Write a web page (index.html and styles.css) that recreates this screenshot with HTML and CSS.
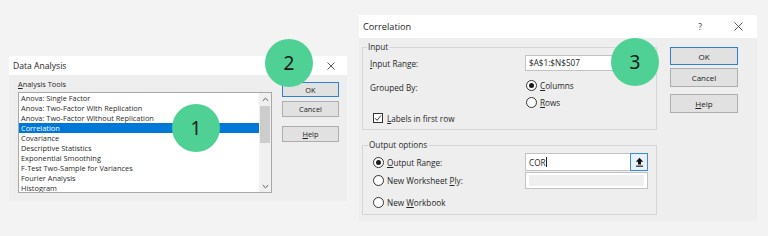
FILE: index.html
```html
<!DOCTYPE html>
<html>
<head>
<meta charset="utf-8">
<title>Data Analysis - Correlation</title>
<link rel="stylesheet" href="styles.css">
</head>
<body>
<div class="page">
  <section class="dlg dlg-left">
    <header class="titlebar">
      <span class="title">Data Analysis</span>
      <svg class="xicon" width="8" height="8" viewBox="0 0 8 8"><path d="M0.5 0.5 L7.5 7.5 M7.5 0.5 L0.5 7.5" stroke="#444" stroke-width="0.9" fill="none"/></svg>
    </header>
    <div class="lbody">
      <div class="tools">
        <div class="lbl"><u>A</u>nalysis Tools</div>
        <div class="listbox">
          <ul class="items">
            <li>Anova: Single Factor</li>
            <li>Anova: Two-Factor With Replication</li>
            <li>Anova: Two-Factor Without Replication</li>
            <li class="sel">Correlation</li>
            <li>Covariance</li>
            <li>Descriptive Statistics</li>
            <li>Exponential Smoothing</li>
            <li>F-Test Two-Sample for Variances</li>
            <li>Fourier Analysis</li>
            <li>Histogram</li>
          </ul>
          <div class="scrollbar">
            <span class="sarrow"><svg width="7" height="5" viewBox="0 0 7 5"><path d="M0.8 3.8 L3.5 1.2 L6.2 3.8" stroke="#555" stroke-width="1" fill="none"/></svg></span>
            <span class="thumb"></span>
            <span class="sfill"></span>
            <span class="sarrow"><svg width="7" height="5" viewBox="0 0 7 5"><path d="M0.8 1.2 L3.5 3.8 L6.2 1.2" stroke="#555" stroke-width="1" fill="none"/></svg></span>
          </div>
        </div>
      </div>
      <div class="lbtns">
        <button class="btn primary b-ok">OK</button>
        <button class="btn b-cancel">Cancel</button>
        <button class="btn b-help"><u>H</u>elp</button>
      </div>
    </div>
  </section>

  <section class="dlg dlg-right">
    <header class="titlebar">
      <span class="title">Correlation</span>
      <span class="qmark">?</span>
      <svg class="xicon" width="9" height="9" viewBox="0 0 9 9"><path d="M0.5 0.5 L8.5 8.5 M8.5 0.5 L0.5 8.5" stroke="#444" stroke-width="0.9" fill="none"/></svg>
    </header>
    <div class="rbody">
      <div class="groups">
        <fieldset class="grp grp-in">
          <legend>Input</legend>
          <div class="row r-range">
            <span class="rlabel"><u>I</u>nput Range:</span>
            <span class="field f-in">$A$1:$N$507</span>
          </div>
          <div class="row r-group">
            <span class="rlabel gb">Grouped By:</span>
            <div class="radios">
              <div class="opt"><span class="radio on"></span><span><u>C</u>olumns</span></div>
              <div class="opt"><span class="radio"></span><span><u>R</u>ows</span></div>
            </div>
          </div>
          <div class="row r-check">
            <span class="check"><svg width="8" height="8" viewBox="0 0 8 8"><path d="M1 4.2 L3 6.3 L7 1.5" stroke="#222" stroke-width="0.9" fill="none"/></svg></span>
            <span><u>L</u>abels in first row</span>
          </div>
        </fieldset>
        <fieldset class="grp grp-out">
          <legend>Output options</legend>
          <div class="row o1">
            <div class="olabel"><span class="radio on"></span><span><u>O</u>utput Range:</span></div>
            <div class="field f-out"><span class="txt">COR<span class="caret"></span></span>
              <span class="pick"><svg width="9" height="10" viewBox="0 0 9 10"><path d="M4.5 0.8 L8.2 4.8 L6 4.8 L6 7.6 L3 7.6 L3 4.8 L0.8 4.8 Z" fill="#111"/><rect x="1" y="8.6" width="7" height="1.1" fill="#111"/></svg></span>
            </div>
          </div>
          <div class="row o2">
            <div class="olabel"><span class="radio"></span><span>New Worksheet <u>P</u>ly:</span></div>
            <div class="field f-dis"><span class="disfill"></span></div>
          </div>
          <div class="row o3">
            <div class="olabel"><span class="radio"></span><span>New <u>W</u>orkbook</span></div>
          </div>
        </fieldset>
      </div>
      <div class="rbtns">
        <button class="btn primary rb-ok">OK</button>
        <button class="btn rb-cancel">Cancel</button>
        <button class="btn rb-help"><u>H</u>elp</button>
      </div>
    </div>
  </section>

  <span class="badge b1">1</span>
  <span class="badge b2">2</span>
  <span class="badge b3">3</span>
</div>
</body>
</html>
```

FILE: styles.css
```css
* { box-sizing: border-box; }
html, body { margin: 0; padding: 0; }
body {
  background: #f3f3f3;
  font-family: "Open Sans", "Noto Sans", sans-serif;
  color: #262626;
  width: 768px;
  height: 236px;
  overflow: hidden;
}
u { text-decoration: underline; text-underline-offset: 1px; text-decoration-thickness: 0.6px; }

.page {
  position: relative;
  display: flex;
  align-items: flex-start;
  gap: 12px;
  padding-left: 9px;
  height: 236px;
}

.dlg { background: #eeeeee; display: flex; flex-direction: column; }
.dlg-left { width: 338px; height: 145px; margin-top: 56px; }
.dlg-right { width: 398px; height: 206px; margin-top: 15px; }

.titlebar { background: #ffffff; display: flex; align-items: center; padding-left: 4px; flex: none; }
.title { flex: 1; color: #1e1e1e; }
.dlg-left .titlebar { height: 19px; padding-right: 12px; }
.dlg-left .title { font-size: 8.6px; }
.dlg-right .titlebar { height: 23px; padding-right: 14px; }
.dlg-right .title { font-size: 9.2px; }
.qmark { font-size: 8.6px; color: #333; margin-right: 32px; }
.xicon { display: block; }

/* left dialog body */
.lbody { display: flex; padding-left: 9px; }
.tools { width: 254px; }
.lbl { font-size: 7.4px; line-height: 10px; margin-top: 4px; margin-bottom: 3px; }
.listbox {
  height: 101px;
  border: 1px solid #a8a8a8;
  background: #ffffff;
  display: flex;
}
.items { list-style: none; margin: 0; padding: 0; flex: 1; overflow: hidden; }
.items li {
  height: 10px;
  line-height: 10px;
  padding-left: 2px;
  font-size: 7.4px;
  white-space: nowrap;
  color: #2a2a2a;
}
.items li.sel { background: #0078d7; color: #ffffff; }
.scrollbar {
  width: 12px;
  background: #f0f0f0;
  display: flex;
  flex-direction: column;
  align-items: center;
}
.sarrow { height: 12px; display: flex; align-items: center; justify-content: center; }
.thumb { width: 10px; height: 37px; margin-top: 1px; background: #cdcdcd; }
.sfill { flex: 1; }

.btn {
  font-family: inherit;
  font-size: 7.4px;
  color: #222;
  background: #e1e1e1;
  border: 1px solid #adadad;
  padding: 0;
  margin: 0;
  display: flex;
  align-items: center;
  justify-content: center;
}
.btn.primary { border-color: #2f7fd4; }
.lbtns { width: 57px; margin-left: 10px; margin-top: 7px; display: flex; flex-direction: column; }
.b-ok { height: 15px; }
.b-cancel { height: 16px; margin-top: 4px; }
.b-help { height: 16px; margin-top: 9px; }

/* right dialog body */
.rbody { display: flex; padding: 4px 0 0 3px; font-size: 8.2px; }
.groups { width: 295px; display: flex; flex-direction: column; gap: 10px; }
.grp { margin: 0; padding: 0; border: 1px solid #d6d6d6; min-width: 0; }
.grp legend { font-size: 8.2px; line-height: 10px; padding: 0 1px; margin-left: 4px; color: #2a2a2a; }
.grp-out legend { margin-left: 5px; }
.row { display: flex; }
.rlabel { width: 162px; padding-left: 7px; flex: none; }

.r-range { margin-top: 3px; height: 16px; align-items: center; }
.field { background: #ffffff; border: 1px solid #c3c3c3; }
.f-in { width: 97px; height: 16px; padding-left: 3px; line-height: 14px; }

.r-group { margin-top: 8px; }
.gb { margin-top: 4px; line-height: 10px; }
.radios { display: flex; flex-direction: column; gap: 5px; margin-left: 1px; }
.opt { display: flex; align-items: center; gap: 3px; height: 12px; }
.radio {
  width: 11px; height: 11px; border-radius: 50%;
  border: 1px solid #333; background: #fff;
  display: inline-flex; align-items: center; justify-content: center; flex: none;
}
.radio.on::after { content: ""; width: 5px; height: 5px; border-radius: 50%; background: #1a1a1a; }

.r-check { margin-top: 4px; height: 12px; align-items: center; padding-left: 10px; gap: 4px; }
.grp-in { padding-bottom: 5px; }
.check {
  width: 10px; height: 10px; border: 1px solid #333; background: #fff;
  display: inline-flex; align-items: center; justify-content: center; flex: none;
}

.olabel { width: 162px; flex: none; display: flex; align-items: center; gap: 3px; padding-left: 10px; }
.o1 { margin-top: 3px; height: 18px; }
.o2 { margin-top: 1px; height: 17px; }
.o3 { margin-top: 7px; height: 12px; }
.grp-out { padding-bottom: 6px; }
.f-out { width: 123px; display: flex; align-items: stretch; }
.f-out .txt { flex: 1; padding-left: 3px; display: flex; align-items: center; }
.caret { display: inline-block; width: 1px; height: 10px; background: #222; margin-left: 0.5px; }
.pick {
  width: 18px; margin: -1px -1px -1px 0;
  border: 1px solid #3a8ae0; background: #e8f2fc;
  display: flex; align-items: center; justify-content: center;
}
.f-dis { width: 123px; padding: 2px 3px; display: flex; }
.disfill { flex: 1; background: #efefef; }

.rbtns { width: 68px; margin-left: 13px; margin-top: 5px; display: flex; flex-direction: column; }
.rbtns .btn { font-size: 8px; }
.rb-ok { height: 18px; }
.rb-cancel { height: 19px; margin-top: 3px; }
.rb-help { height: 19px; margin-top: 7px; }

/* step badges */
.badge {
  position: absolute;
  width: 48px; height: 48px;
  border-radius: 50%;
  background: #4fd195;
  color: #1a1a1a;
  display: flex; align-items: center; justify-content: center;
  font-family: "Noto Sans", sans-serif;
  font-size: 19px;
  font-weight: 400;
}
.b1 { left: 172px; top: 104px; }
.b2 { left: 265px; top: 39px; }
.b3 { left: 611px; top: 38px; }
```
